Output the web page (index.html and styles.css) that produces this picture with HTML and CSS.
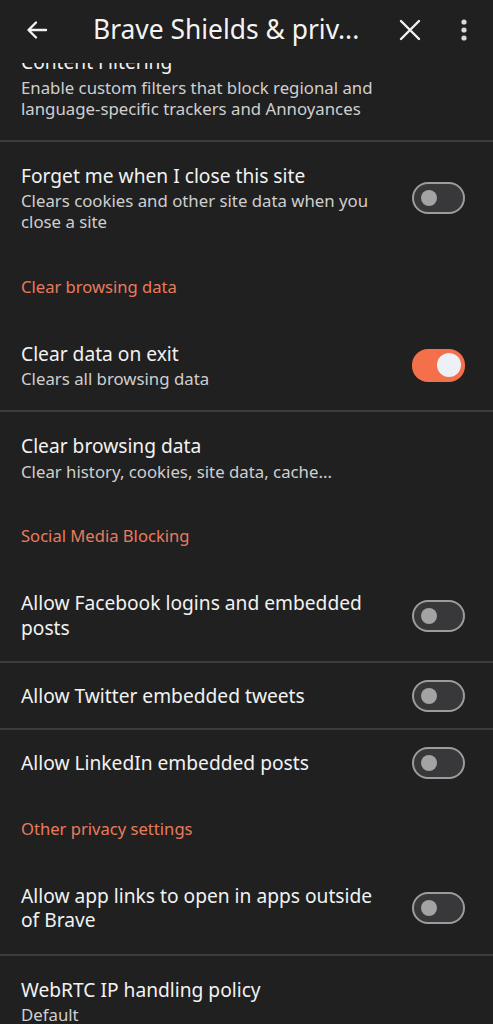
FILE: index.html
```html
<!DOCTYPE html>
<html lang="en">
<head>
    <meta charset="UTF-8">
    <meta name="viewport" content="width=device-width, initial-scale=1.0">
    <title>Brave Shields &amp; privacy</title>
    <link rel="stylesheet" href="styles.css">
</head>
<body>
    <!-- Toolbar -->
    <div class="toolbar">
        <button class="icon-btn back">
            <svg width="24" height="24" viewBox="0 0 24 24"><path d="M21 12H4M11 4.5L3.5 12l7.5 7.5" fill="none" stroke="#f2f2f2" stroke-width="2.4" stroke-linecap="round" stroke-linejoin="round"/></svg>
        </button>
        <div class="title">Brave Shields &amp; priv...</div>
        <button class="icon-btn close">
            <svg width="22" height="22" viewBox="0 0 22 22"><path d="M2 2l18 18M20 2L2 20" fill="none" stroke="#f2f2f2" stroke-width="2.4" stroke-linecap="round"/></svg>
        </button>
        <button class="icon-btn more">
            <svg width="8" height="24" viewBox="0 0 8 24"><circle cx="4" cy="4" r="2.6" fill="#d8d8d8"/><circle cx="4" cy="12" r="2.6" fill="#d8d8d8"/><circle cx="4" cy="20" r="2.6" fill="#d8d8d8"/></svg>
        </button>
    </div>

    <!-- settings list -->
    <div class="scroller">
        <div class="item first divider">
            <div class="text">
                <div class="item-title">Content Filtering</div>
                <div class="item-sub">Enable custom filters that block regional and language-specific trackers and Annoyances</div>
            </div>
        </div>
        <div class="item">
            <div class="text">
                <div class="item-title">Forget me when I close this site</div>
                <div class="item-sub">Clears cookies and other site data when you close a site</div>
            </div>
            <div class="switch"></div>
        </div>

        <div class="section">Clear browsing data</div>
        <div class="item divider">
            <div class="text">
                <div class="item-title">Clear data on exit</div>
                <div class="item-sub">Clears all browsing data</div>
            </div>
            <div class="switch on"></div>
        </div>
        <div class="item">
            <div class="text">
                <div class="item-title">Clear browsing data</div>
                <div class="item-sub">Clear history, cookies, site data, cache...</div>
            </div>
        </div>

        <div class="section">Social Media Blocking</div>
        <div class="item divider">
            <div class="text">
                <div class="item-title">Allow Facebook logins and embedded posts</div>
            </div>
            <div class="switch"></div>
        </div>
        <div class="item single divider">
            <div class="text">
                <div class="item-title">Allow Twitter embedded tweets</div>
            </div>
            <div class="switch"></div>
        </div>
        <div class="item single">
            <div class="text">
                <div class="item-title">Allow LinkedIn embedded posts</div>
            </div>
            <div class="switch"></div>
        </div>

        <div class="section">Other privacy settings</div>
        <div class="item divider">
            <div class="text">
                <div class="item-title">Allow app links to open in apps outside of Brave</div>
            </div>
            <div class="switch"></div>
        </div>
        <div class="item">
            <div class="text">
                <div class="item-title">WebRTC IP handling policy</div>
                <div class="item-sub">Default</div>
            </div>
        </div>
    </div>
</body>
</html>
```

FILE: styles.css
```css
body {
    font-family: "Noto Sans", "Open Sans", sans-serif;
    margin: 0;
    padding: 0;
    background-color: #202020;
    color: #f0f0f0;
    height: 1024px;
    overflow: hidden;
    display: flex;
    flex-direction: column;
}
.toolbar {
    height: 63px;
    flex-shrink: 0;
    display: flex;
    align-items: center;
    background-color: #202020;
    position: relative;
    z-index: 2;
}
.icon-btn {
    background: none;
    border: none;
    padding: 0;
    display: flex;
    align-items: center;
    justify-content: center;
    cursor: pointer;
}
.back {
    width: 48px;
    margin-left: 13px;
    margin-top: -4px;
}
.title {
    flex: 1;
    font-size: 26.4px;
    margin-left: 32px;
    margin-top: -6px;
    white-space: nowrap;
    color: #f4f4f4;
}
.close {
    width: 40px;
    margin-top: -4px;
}
.more {
    width: 28px;
    margin-left: 20px;
    margin-right: 15px;
    margin-top: -4px;
}
.scroller {
    flex: 1;
    overflow: hidden;
}
.item {
    display: flex;
    align-items: center;
    padding: 22px 28px 21px 21px;
}
.item.first {
    margin-top: -35px;
}
.item.single {
    padding-top: 20.5px;
    padding-bottom: 20px;
}
.item.divider {
    border-bottom: 2px solid #3c3c3c;
}
.text {
    flex: 1;
    padding-right: 28px;
}
.item-title {
    font-size: 19.2px;
    line-height: 24.5px;
    color: #f2f2f2;
}
.item-sub {
    margin-top: 2px;
    font-size: 16.8px;
    line-height: 21px;
    color: #cfcfcf;
}
.section {
    padding: 22.5px 21px 22px;
    font-size: 16.6px;
    line-height: 22px;
    color: #e97b5d;
}
.switch {
    width: 49px;
    height: 28px;
    margin: -4px 0;
    border: 2px solid #9c9c9c;
    border-radius: 16px;
    background-color: #38383a;
    position: relative;
    flex-shrink: 0;
}
.switch::after {
    content: "";
    position: absolute;
    left: 7px;
    top: 6px;
    width: 16px;
    height: 16px;
    border-radius: 50%;
    background-color: #a3a3a3;
}
.switch.on {
    width: 53px;
    height: 33px;
    border: none;
    background-color: #f4704a;
}
.switch.on::after {
    left: 25px;
    top: 4.5px;
    width: 24px;
    height: 24px;
    background-color: #eef0f8;
}
```
